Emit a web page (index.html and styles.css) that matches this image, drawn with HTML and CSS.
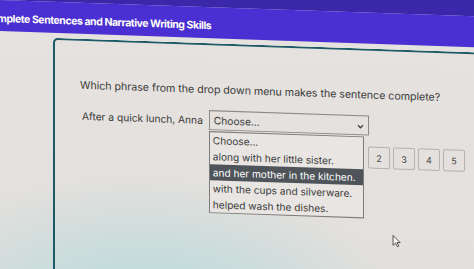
FILE: index.html
```html
<!DOCTYPE html>
<html>
<head>
<meta charset="utf-8">
<link rel="stylesheet" href="styles.css">
</head>
<body>
<div class="stage">
  <div class="topband"></div>
  <header class="header">
    <h1 class="title">Complete Sentences and Narrative Writing Skills</h1>
  </header>
  <section class="panel">
    <p class="question">Which phrase from the drop down menu makes the sentence complete?</p>
    <div class="sentence">
      <span class="lead">After a quick lunch, Anna</span>
      <div class="select">
        <span class="select-text">Choose...</span>
        <svg class="chevron" width="7" height="5" viewBox="0 0 7 5"><path d="M1 1 L3.5 3.5 L6 1" fill="none" stroke="#444" stroke-width="1.4"/></svg>
        <ul class="options">
          <li class="option">Choose...</li>
          <li class="option">along with her little sister.</li>
          <li class="option active">and her mother in the kitchen.</li>
          <li class="option">with the cups and silverware.</li>
          <li class="option">helped wash the dishes.</li>
        </ul>
      </div>
    </div>
    <div class="pages">
      <span class="page">2</span>
      <span class="page">3</span>
      <span class="page">4</span>
      <span class="page">5</span>
    </div>
  </section>
  <svg class="cursor" width="9" height="13" viewBox="0 0 9 13"><path d="M1 1 L1 11 L3.5 8.6 L5.3 12.2 L6.8 11.5 L5 8 L8.2 8 Z" fill="#f4f4f4" stroke="#333" stroke-width="0.8"/></svg>
</div>
</body>
</html>
```

FILE: styles.css
```css
html, body {
  margin: 0;
  padding: 0;
  width: 474px;
  height: 269px;
  overflow: hidden;
  background: #e4e0dc;
}

.stage {
  position: relative;
  width: 480px;
  height: 320px;
  margin-top: -20px;
  transform-origin: 0 20px;
  transform: skewY(1.95deg);
  font-family: "Inter", "Open Sans", sans-serif;
  background:
    radial-gradient(ellipse 260px 140px at 150px 330px, rgba(140, 212, 218, 0.55), rgba(140, 212, 218, 0) 100%),
    linear-gradient(#e6e2df, #e2dfdc);
}

.topband {
  height: 20px;
  background: #3a27aa;
}

.header {
  height: 31px;
  background: #4a2fd3;
  overflow: hidden;
}

.title {
  margin: 0;
  padding-top: 12px;
  margin-left: -16px;
  font-size: 10.5px;
  line-height: 14px;
  font-weight: 700;
  color: #ffffff;
  white-space: nowrap;
  letter-spacing: -0.45px;
}

.panel {
  margin-top: 5px;
  margin-left: 53px;
  height: 260px;
  border-top: 2px solid #1c5a68;
  border-left: 2px solid #1c5a68;
  border-top-left-radius: 5px;
  padding-left: 25px;
  padding-top: 37px;
  box-sizing: border-box;
}

.question {
  margin: 0;
  font-size: 10.6px;
  line-height: 16px;
  color: #3a3a3a;
  white-space: nowrap;
}

.sentence {
  display: flex;
  align-items: center;
  margin-top: 12px;
  margin-left: 2px;
  font-size: 10.2px;
  color: #3a3a3a;
}

.lead {
  white-space: nowrap;
  margin-right: 6px;
}

.select {
  position: relative;
  width: 160px;
  height: 20px;
  border: 1px solid #8c8a88;
  box-sizing: border-box;
  display: flex;
  align-items: center;
  justify-content: space-between;
  padding: 0 4px 0 4px;
}

.select-text {
  font-size: 10.2px;
  color: #3a3a3a;
}

.chevron {
  margin-top: 3px;
}

.options {
  position: absolute;
  left: -1px;
  top: 20px;
  width: 153px;
  margin: 0;
  padding: 0;
  list-style: none;
  border: 1px solid #7c7c7c;
  background: #e8e5e2;
}

.option {
  height: 16px;
  line-height: 16px;
  padding-left: 3px;
  font-size: 10.1px;
  color: #3a3a3a;
  white-space: nowrap;
}

.option.active {
  background: #4e5459;
  color: #ffffff;
}

.pages {
  display: flex;
  gap: 3px;
  margin-top: 11px;
  margin-left: 288px;
}

.page {
  width: 22px;
  height: 22px;
  box-sizing: border-box;
  border: 1px solid #b4b1ae;
  border-radius: 2px;
  display: flex;
  align-items: center;
  justify-content: center;
  font-size: 9px;
  color: #444;
}

.cursor {
  position: absolute;
  left: 392px;
  top: 241px;
}
```
